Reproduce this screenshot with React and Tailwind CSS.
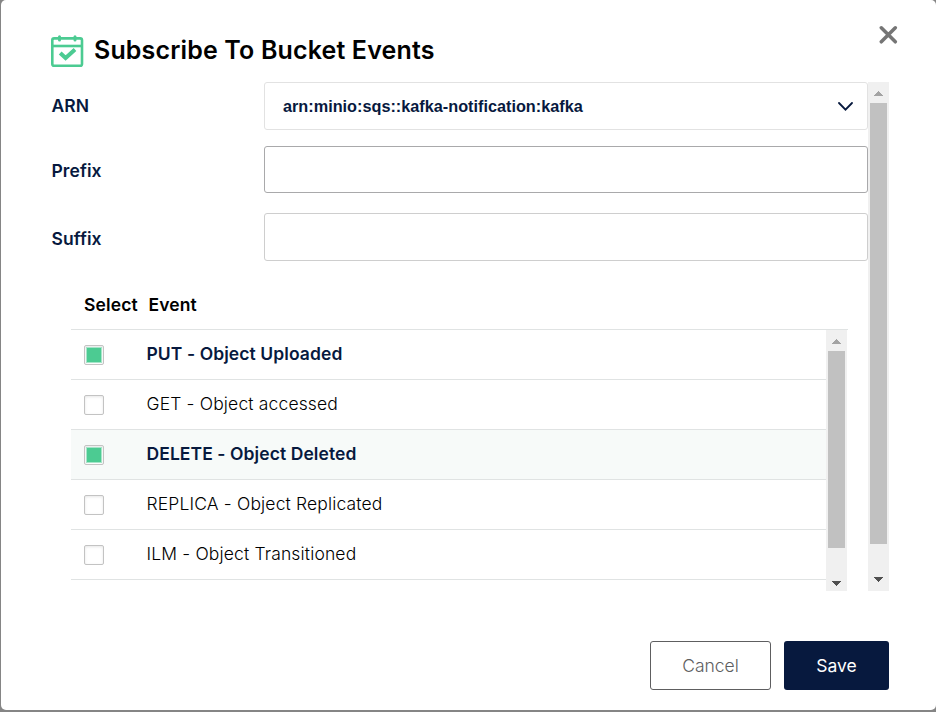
import { useState } from "react";

const events = [
  { id: "put", label: "PUT - Object Uploaded" },
  { id: "get", label: "GET - Object accessed" },
  { id: "delete", label: "DELETE - Object Deleted" },
  { id: "replica", label: "REPLICA - Object Replicated" },
  { id: "ilm", label: "ILM - Object Transitioned" },
];

const EventIcon = () => (
  <svg width="33" height="34" viewBox="0 0 33 34" fill="none" stroke="#4ccb92">
    <rect x="1.3" y="4.4" width="29.7" height="27.4" rx="1.8" strokeWidth="2.6" />
    <path d="M1.5 12H31" strokeWidth="2.6" />
    <path d="M8.5 2.8V6M24 2.8V6" strokeWidth="3" strokeLinecap="round" />
    <path d="M9.2 19L14.6 24L24 15.5" strokeWidth="4" />
  </svg>
);

// Scrollbar with square ends, thumb height comes from the caller
const ScrollBar = ({ className, thumbClass, downClass }) => (
  <div className={`flex w-[21px] shrink-0 flex-col items-center bg-[#f0f0f0] ${className}`}>
    <div className="flex h-[21px] shrink-0 pt-[9px]">
      <svg width="9" height="5" viewBox="0 0 9 5" shapeRendering="crispEdges">
        <path d="M4.5 0L9 5H0Z" fill="#a3a3a3" />
      </svg>
    </div>
    <div className={`w-[17px] shrink-0 bg-[#c1c1c1] ${thumbClass}`} />
    <div className={`mt-auto ${downClass}`}>
      <svg width="9" height="5" viewBox="0 0 9 5" shapeRendering="crispEdges">
        <path d="M0 0H9L4.5 5Z" fill="#505050" />
      </svg>
    </div>
  </div>
);

const Checkbox = ({ checked, onChange }) => (
  <button
    type="button"
    role="checkbox"
    aria-checked={checked}
    onClick={onChange}
    className="flex h-5 w-5 shrink-0 items-center justify-center rounded-[2px] border border-[#c3c3c3] bg-white shadow-[inset_0_1px_3px_rgba(0,0,0,0.1)]"
  >
    {checked && <span className="h-4 w-4 border border-[#a6e5c9] bg-[#4ccb92]" />}
  </button>
);

const Field = ({ label, className, labelClass, children }) => (
  <div className={`flex items-center ${className}`}>
    <label className={`w-[213px] shrink-0 pl-[0.5px] text-[17.5px] font-semibold tracking-[0.08px] text-[#07193e] ${labelClass}`}>
      {label}
    </label>
    {children}
  </div>
);

const App = () => {
  const [selected, setSelected] = useState(["put", "delete"]);
  const [prefix, setPrefix] = useState("");
  const [suffix, setSuffix] = useState("");

  const toggle = (id) => {
    setSelected(selected.includes(id) ? selected.filter((s) => s !== id) : [...selected, id]);
  };

  return (
    <div className="h-[712px] w-[936px] overflow-hidden bg-[#858585] pb-[2px] pl-px font-['Inter',sans-serif]">
      <div className="flex h-[710px] w-[935px] flex-col rounded-[5px] bg-white pr-[47px] pl-[50px]">
        {/* Title */}
        <div className="flex h-[82px] shrink-0 justify-between">
          <div className="flex items-start pt-[34px]">
            <EventIcon />
            <h1 className="ml-[10px] text-[25px] leading-[32px] font-semibold tracking-[0.15px] whitespace-nowrap text-black">
              Subscribe To Bucket Events
            </h1>
          </div>
          <button type="button" aria-label="Close" className="mt-[25px] mr-[-9px] h-[19px] w-[19px]">
            <svg width="19" height="19" viewBox="0 0 19 19" stroke="#757575" strokeWidth="3.5" strokeLinecap="round">
              <path d="M2.3 2.8L16.3 16.8M16.3 2.8L2.3 16.8" />
            </svg>
          </button>
        </div>

        <div className="flex h-[509px] shrink-0">
          <div className="flex min-w-0 flex-1 flex-col">
            <Field label="ARN" className="h-12">
              <button
                type="button"
                className="flex h-12 w-[604px] items-center justify-between rounded-[3px] border border-[#e2e2e2] pr-[14px] pl-[18px] font-['Liberation_Sans',Arial,sans-serif] text-[16.25px] font-bold text-[#07193e]"
              >
                <span>arn:minio:sqs::kafka-notification:kafka</span>
                <svg width="15" height="9" viewBox="0 0 15 9" fill="none" stroke="#07193e" strokeWidth="1.8" strokeLinecap="round">
                  <path d="M1 1L7.5 7.7L14 1" />
                </svg>
              </button>
            </Field>
            <Field label="Prefix" className="mt-4 h-[47px]" labelClass="pt-1">
              <input
                value={prefix}
                onChange={(e) => setPrefix(e.target.value)}
                className="h-[47px] w-[604px] rounded-[3px] border border-[#a9a9ab] px-4 outline-none"
              />
            </Field>
            <Field label="Suffix" className="mt-5 h-12" labelClass="pt-1">
              <input
                value={suffix}
                onChange={(e) => setSuffix(e.target.value)}
                className="h-12 w-[604px] rounded-[3px] border border-[#cecece] px-4 outline-none"
              />
            </Field>

            {/* Events table */}
            <div className="mt-[18px] ml-5 flex h-[312px] w-[777px] flex-col">
              <div className="flex h-[51px] shrink-0 items-center border-b border-[#e0e3e3] pt-[2px] pl-[13px] text-[17.5px] font-semibold tracking-[0.12px] text-black">
                <span className="w-[64.5px]">Select</span>
                <span>Event</span>
              </div>
              <div className="flex h-[261px]">
                <div className="w-[755px]">
                  {events.map((event) => {
                    const checked = selected.includes(event.id);
                    return (
                      <div
                        key={event.id}
                        className={`flex h-[50px] items-center border-b border-[#e0e3e3] pl-[13px] ${
                          event.id === "delete" ? "bg-[#f7faf9]" : ""
                        }`}
                      >
                        <Checkbox checked={checked} onChange={() => toggle(event.id)} />
                        <span
                          className={`ml-[42.5px] text-[17.5px] ${
                            checked
                              ? "font-semibold tracking-[0.08px] text-[#07193e]"
                              : "font-light tracking-[0.15px] text-black"
                          }`}
                        >
                          {event.label}
                        </span>
                      </div>
                    );
                  })}
                </div>
                <ScrollBar className="h-[261px]" thumbClass="h-[197px]" downClass="pb-[5px]" />
              </div>
            </div>
          </div>
          <ScrollBar className="h-[509px]" thumbClass="h-[441px]" downClass="pb-[9px]" />
        </div>

        {/* Actions */}
        <div className="mt-[50px] flex justify-end gap-[13px] text-[17.5px]">
          <button type="button" className="h-[49px] w-[121px] rounded-[3px] border border-[#5e5e60] pt-[2px] font-light text-[#5e5e60]">
            Cancel
          </button>
          <button type="button" className="h-[49px] w-[105px] rounded-[3px] bg-[#07193e] pt-[2px] text-white">
            Save
          </button>
        </div>
      </div>
    </div>
  );
};

export default App;
